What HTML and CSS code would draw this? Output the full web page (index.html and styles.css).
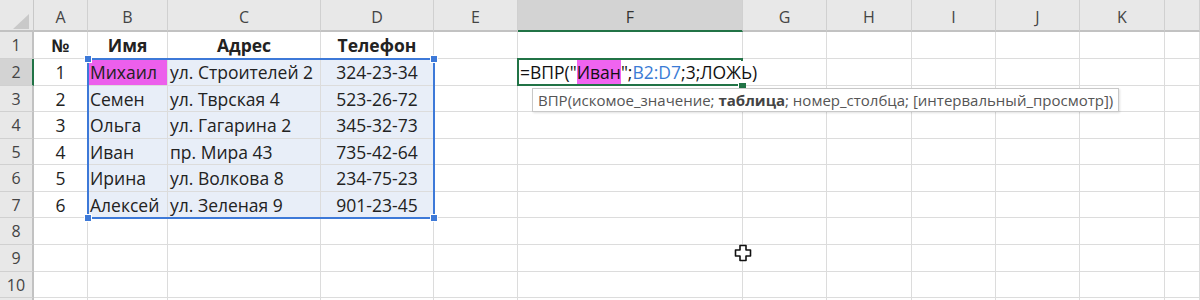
FILE: index.html
```html
<!DOCTYPE html>
<html lang="ru">
<head>
<meta charset="utf-8">
<link rel="stylesheet" href="styles.css">
</head>
<body>
<div class="sheet">
  <div class="corner"><span class="tri"></span></div>
  <div class="h">A</div><div class="h">B</div><div class="h">C</div><div class="h">D</div><div class="h">E</div><div class="h hsel">F</div><div class="h">G</div><div class="h">H</div><div class="h">I</div><div class="h">J</div><div class="h">K</div><div class="h"></div>

  <div class="rh">1</div><div class="c ctr b">№</div><div class="c ctr b">Имя</div><div class="c ctr b">Адрес</div><div class="c ctr b">Телефон</div><div class="c"></div><div class="c"></div><div class="c"></div><div class="c"></div><div class="c"></div><div class="c"></div><div class="c"></div><div class="c"></div>

  <div class="rh rsel">2</div><div class="c ctr">1</div><div class="c s mag">Михаил</div><div class="c s">ул. Строителей 2</div><div class="c s ctr">324-23-34</div><div class="c"></div><div class="c edit"><span class="formula">=ВПР("<span class="hl">Иван</span>";<span class="ref">B2:D7</span>;3;ЛОЖЬ)</span></div><div class="c"></div><div class="c"></div><div class="c"></div><div class="c"></div><div class="c"></div><div class="c"></div>

  <div class="rh">3</div><div class="c ctr">2</div><div class="c s">Семен</div><div class="c s">ул. Тврская 4</div><div class="c s ctr">523-26-72</div><div class="c"></div><div class="c"></div><div class="c"></div><div class="c"></div><div class="c"></div><div class="c"></div><div class="c"></div><div class="c"></div>

  <div class="rh">4</div><div class="c ctr">3</div><div class="c s">Ольга</div><div class="c s">ул. Гагарина 2</div><div class="c s ctr">345-32-73</div><div class="c"></div><div class="c"></div><div class="c"></div><div class="c"></div><div class="c"></div><div class="c"></div><div class="c"></div><div class="c"></div>

  <div class="rh">5</div><div class="c ctr">4</div><div class="c s">Иван</div><div class="c s">пр. Мира 43</div><div class="c s ctr">735-42-64</div><div class="c"></div><div class="c"></div><div class="c"></div><div class="c"></div><div class="c"></div><div class="c"></div><div class="c"></div><div class="c"></div>

  <div class="rh">6</div><div class="c ctr">5</div><div class="c s">Ирина</div><div class="c s">ул. Волкова 8</div><div class="c s ctr">234-75-23</div><div class="c"></div><div class="c"></div><div class="c"></div><div class="c"></div><div class="c"></div><div class="c"></div><div class="c"></div><div class="c"></div>

  <div class="rh">7</div><div class="c ctr">6</div><div class="c s">Алексей</div><div class="c s">ул. Зеленая 9</div><div class="c s ctr">901-23-45</div><div class="c"></div><div class="c"></div><div class="c"></div><div class="c"></div><div class="c"></div><div class="c"></div><div class="c"></div><div class="c"></div>

  <div class="rh">8</div><div class="c"></div><div class="c"></div><div class="c"></div><div class="c"></div><div class="c"></div><div class="c"></div><div class="c"></div><div class="c"></div><div class="c"></div><div class="c"></div><div class="c"></div><div class="c"></div>

  <div class="rh">9</div><div class="c"></div><div class="c"></div><div class="c"></div><div class="c"></div><div class="c"></div><div class="c"></div><div class="c"></div><div class="c"></div><div class="c"></div><div class="c"></div><div class="c"></div><div class="c"></div>

  <div class="rh">10</div><div class="c"></div><div class="c"></div><div class="c"></div><div class="c"></div><div class="c"></div><div class="c"></div><div class="c"></div><div class="c"></div><div class="c"></div><div class="c"></div><div class="c"></div><div class="c"></div>

  <div class="rh"></div><div class="c"></div><div class="c"></div><div class="c"></div><div class="c"></div><div class="c"></div><div class="c"></div><div class="c"></div><div class="c"></div><div class="c"></div><div class="c"></div><div class="c"></div><div class="c"></div>

  <div class="range">
    <span class="hd tl"></span><span class="hd tr"></span><span class="hd bl"></span><span class="hd br"></span>
  </div>

  <div class="tip"><span>ВПР(искомое_значение; <b>таблица</b>; номер_столбца; [интервальный_просмотр])</span></div>

  <svg class="cursor" width="20" height="20" viewBox="0 0 20 20">
    <path d="M7 2.5 H13 V7 H17.5 V13 H13 V17.5 H7 V13 H2.5 V7 H7 Z" fill="#fff" stroke="#111" stroke-width="1.6" stroke-linejoin="round"/>
  </svg>
</div>
</body>
</html>
```

FILE: styles.css
```css
html, body {
  margin: 0;
  padding: 0;
  background: #fff;
}

.sheet {
  position: relative;
  width: 1200px;
  height: 300px;
  overflow: hidden;
  display: grid;
  grid-template-columns: 34px 54px 80px 153px 113px 84px 225px 84px 85px 84px 84px 85px 35px;
  grid-template-rows: 32px 27px 27px 26px 27px 26px 27px 26px 27px 27px 26px 10px;
  font-family: "Open Sans", "Liberation Sans", sans-serif;
  font-size: 17.5px;
  color: #222;
}

.corner {
  background: #e8e8e8;
  border-right: 1px solid #c8c8c8;
  border-bottom: 2px solid #c2c2c2;
  box-sizing: border-box;
  position: relative;
}

.tri {
  position: absolute;
  left: 13px;
  top: 14px;
  width: 0;
  height: 0;
  border-left: 16px solid transparent;
  border-bottom: 15px solid #c9c9c9;
}

.h {
  background: #e8e8e8;
  border-right: 1px solid #d0d0d0;
  border-bottom: 2px solid #c2c2c2;
  box-sizing: border-box;
  display: flex;
  align-items: center;
  justify-content: center;
  color: #444;
  font-size: 16px;
  padding-top: 4px;
}

.hsel {
  background: #d3d3d3;
  border-bottom: 2px solid #217346;
  color: #333;
}

.rh {
  background: #e8e8e8;
  border-right: 2px solid #c2c2c2;
  border-bottom: 1px solid #d0d0d0;
  box-sizing: border-box;
  display: flex;
  align-items: center;
  justify-content: center;
  color: #444;
  font-size: 16px;
}

.rsel {
  background: #d3d3d3;
  border-right: 2px solid #217346;
}

.c {
  border-right: 1px solid #dcdcdc;
  border-bottom: 1px solid #dcdcdc;
  box-sizing: border-box;
  display: flex;
  align-items: center;
  padding-left: 2px;
  white-space: nowrap;
  overflow: visible;
  background: #fff;
}

.ctr {
  justify-content: center;
  padding-left: 0;
}

.b {
  font-weight: 700;
}

.s {
  background: #e8eef8;
}

.mag {
  background: #ec5fec;
}

.edit {
  position: relative;
  z-index: 2;
  overflow: visible;
  padding-left: 2px;
}

.edit::after {
  content: "";
  position: absolute;
  left: -1px;
  top: -1px;
  width: 226px;
  height: 28px;
  border: 2px solid #217346;
  box-sizing: border-box;
  pointer-events: none;
}

.edit::before {
  content: "";
  position: absolute;
  left: 220px;
  top: 23px;
  width: 7px;
  height: 6px;
  background: #217346;
  border-left: 1px solid #fff;
  z-index: 3;
}

.formula {
  position: relative;
  z-index: 4;
  background: #fff;
  padding-right: 2px;
  color: #111;
  font-size: 17.5px;
  line-height: 22px;
}

.hl {
  background: #f064f0;
}

.ref {
  color: #3a7bd5;
}

.range {
  position: absolute;
  left: 87px;
  top: 58px;
  width: 348px;
  height: 161px;
  border: 2px solid #3d79d8;
  box-sizing: border-box;
  pointer-events: none;
}

.hd {
  position: absolute;
  width: 6px;
  height: 6px;
  background: #3d79d8;
  border: 1px solid #fff;
}

.tl { left: -5px; top: -5px; }
.tr { right: -5px; top: -5px; }
.bl { left: -5px; bottom: -5px; }
.br { right: -5px; bottom: -5px; }

.tip {
  position: absolute;
  left: 532px;
  top: 88px;
  height: 24px;
  padding: 0 5px;
  box-sizing: border-box;
  background: #fff;
  border: 1px solid #c8c8c8;
  box-shadow: 1px 1px 2px rgba(0,0,0,0.12);
  display: flex;
  align-items: center;
  color: #555;
  font-size: 15px;
  white-space: nowrap;
  z-index: 5;
}

.tip b {
  font-weight: 700;
  color: #444;
}

.cursor {
  position: absolute;
  left: 733px;
  top: 243px;
}
```
